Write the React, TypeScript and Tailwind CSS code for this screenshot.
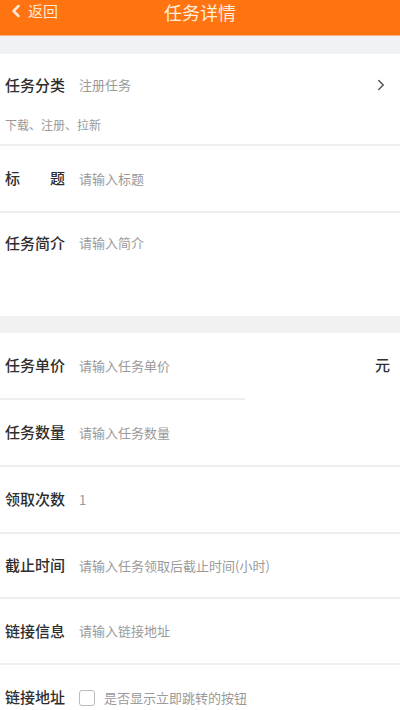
import { ChevronLeft, ChevronRight } from "lucide-react";

const FONT = { fontFamily: '"Noto Sans CJK SC", "Noto Sans", sans-serif' };

const Divider = ({ partial }: { partial?: boolean }) => (
  <div className={partial ? "h-[2px] w-[245px] bg-[#eeeeee]" : "h-[2px] w-full bg-[#eeeeee]"} />
);

const Row = ({ label, value, h = "h-[65px]", right }: { label: string; value: string; h?: string; right?: React.ReactNode }) => (
  <div className={`flex ${h} items-center pl-[5px] pr-[10px]`}>
    <span className="w-[74px] shrink-0 text-[15px] font-medium text-[#2e2e2e]">{label}</span>
    <span className="flex-1 text-[13px] text-[#9a9a9a]">{value}</span>
    {right}
  </div>
);

export default function App() {
  return (
    <div className="h-[710px] w-[400px] overflow-hidden bg-white" style={FONT}>
      <header className="relative flex h-[36px] items-start justify-center border-b border-[#ffb27a] bg-[#ff7411] pt-[1px]">
        <div className="absolute left-[6px] top-[1px] flex items-center text-[#ffe9d6]">
          <ChevronLeft className="h-[20px] w-[20px]" strokeWidth={3} />
          <span className="ml-[2px] text-[15px] leading-[20px]">返回</span>
        </div>
        <h1 className="text-[18px] leading-[22px] text-[#ffeedd]">任务详情</h1>
      </header>
      <div className="h-[18px] bg-[#f1f2f5]" />

      <div className="flex h-[90px] flex-col pl-[5px] pr-[10px]">
        <div className="flex h-[62px] items-center">
          <span className="w-[74px] shrink-0 text-[15px] font-medium text-[#2e2e2e]">任务分类</span>
          <span className="flex-1 text-[13px] text-[#9a9a9a]">注册任务</span>
          <ChevronRight className="h-[18px] w-[18px] text-[#555]" strokeWidth={2} />
        </div>
        <span className="text-[12px] leading-[18px] text-[#999]">下载、注册、拉新</span>
      </div>
      <Divider />
      <Row label="标　　题" value="请输入标题" />
      <Divider />
      <div className="flex h-[103px] items-start pl-[5px] pt-[19px]">
        <span className="w-[74px] shrink-0 text-[15px] font-medium text-[#2e2e2e]">任务简介</span>
        <span className="pt-[1px] text-[13px] text-[#9a9a9a]">请输入简介</span>
      </div>
      <div className="h-[17px] bg-[#f1f1f1]" />

      <Row label="任务单价" value="请输入任务单价" right={<span className="text-[15px] font-medium text-[#2e2e2e]">元</span>} />
      <Divider partial />
      <Row label="任务数量" value="请输入任务数量" />
      <Divider />
      <Row label="领取次数" value="1" />
      <Divider />
      <Row label="截止时间" value="请输入任务领取后截止时间(小时)" h="h-[63px]" />
      <Divider />
      <Row label="链接信息" value="请输入链接地址" h="h-[64px]" />
      <Divider />
      <div className="flex h-[65px] items-center pl-[5px]">
        <span className="w-[74px] shrink-0 text-[15px] font-medium text-[#2e2e2e]">链接地址</span>
        <span className="h-[16px] w-[16px] rounded-[3px] border border-[#bbb]" />
        <span className="ml-[9px] text-[13px] text-[#9a9a9a]">是否显示立即跳转的按钮</span>
      </div>
    </div>
  );
}
